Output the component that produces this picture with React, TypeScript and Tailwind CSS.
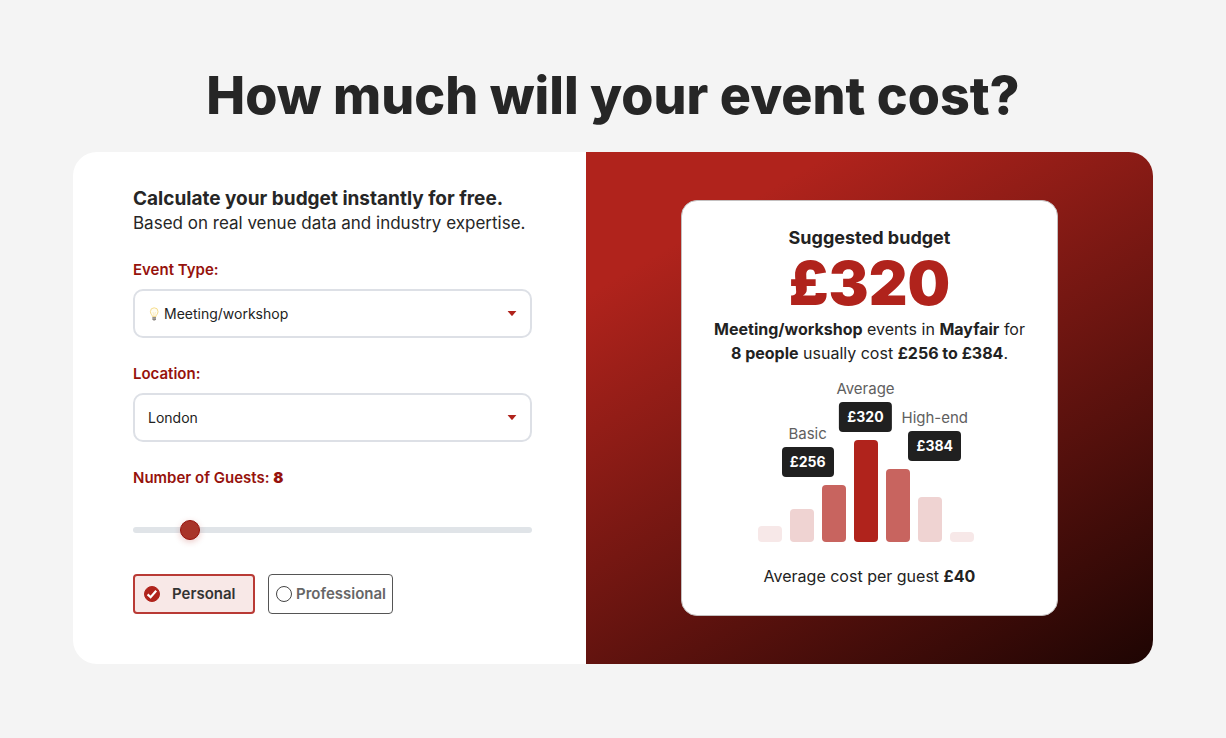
import { useId, useState, type ReactNode } from "react";

interface Bar {
  height: number;
  color: string;
  label?: string;
  price?: string;
  place?: string;
}

const BARS: Bar[] = [
  { height: 16, color: "bg-[#f7e8e8]" },
  { height: 33, color: "bg-[#efd3d2]" },
  { height: 57, color: "bg-[#c8645f]", label: "Basic", price: "£256", place: "right-3" },
  { height: 102, color: "bg-[#b0231c]", label: "Average", price: "£320", place: "left-1/2 -translate-x-1/2" },
  { height: 73, color: "bg-[#c8645f]", label: "High-end", price: "£384", place: "left-4" },
  { height: 45, color: "bg-[#efd3d2]" },
  { height: 10, color: "bg-[#f7e8e8]" },
];

const BulbIcon = () => (
  <svg viewBox="0 0 12 14" className="mr-1 h-3.5 w-3 shrink-0" aria-hidden="true">
    <path
      d="M4.4 9.6C4.3 7.9 2.4 7 2.4 4.6a3.8 3.8 0 0 1 7.6 0C10 7 8.1 7.9 8 9.6Z"
      fill="#fffdf2"
      stroke="#f6dc8c"
      strokeWidth="1"
    />
    <path d="M5.4 9.2V6L4.8 5M7 9.2V6l.6-1" fill="none" stroke="#f8e6ad" strokeWidth=".6" />
    <path d="M4.4 10H8v2.2l-1 1.4H5.4l-1-1.4Z" fill="#8b8680" />
    <path d="M4.4 11.2H8" stroke="#c9c4bc" strokeWidth=".6" />
  </svg>
);

const SelectField = ({ label, options, icon }: { label: string; options: string[]; icon?: ReactNode }) => {
  const id = useId();
  return (
    <div className="flex flex-col gap-[7px]">
      <label htmlFor={id} className="text-[15px] leading-6 font-semibold text-[#96120c]">
        {label}
      </label>
      <div className="flex h-[49px] items-center rounded-[10px] border-2 border-[#dde0e6] bg-white px-[13px]">
        {icon}
        <select id={id} className="h-full min-w-0 flex-1 appearance-none bg-transparent text-sm text-[#222222] outline-none">
          {options.map((o) => (
            <option key={o}>{o}</option>
          ))}
        </select>
        <svg viewBox="0 0 10 5" className="pointer-events-none h-[5px] w-2.5" aria-hidden="true">
          <path d="M.6 0h8.8L5.6 4.6a.8.8 0 0 1-1.2 0Z" fill="#b0231c" />
        </svg>
      </div>
    </div>
  );
};

export default function BudgetCalculator() {
  const [guests, setGuests] = useState(8);
  const [kind, setKind] = useState("Personal");

  return (
    <main className="min-h-screen bg-[#f4f4f4] px-6 pt-15 pb-[75px] font-['Inter',sans-serif] text-[#262626]">
      <h1 className="text-center text-[52px] leading-[72px] font-extrabold">How much will your event cost?</h1>

      <div className="mx-auto mt-5 grid max-w-[1080px] grid-cols-[19fr_21fr] overflow-hidden rounded-3xl bg-white">
        {/* Form */}
        <form className="flex flex-col pt-[35px] pr-[54px] pb-[49px] pl-15">
          <h2 className="text-[19px] leading-6 font-bold">Calculate your budget instantly for free.</h2>
          <p className="text-[17px] leading-6">Based on real venue data and industry expertise.</p>

          <div className="mt-[23px] flex flex-col gap-6">
            <SelectField label="Event Type:" options={["Meeting/workshop", "Birthday party", "Wedding"]} icon={<BulbIcon />} />
            <SelectField label="Location:" options={["London", "Manchester", "Bristol"]} />
            <div>
              <label htmlFor="guests" className="block text-[15px] leading-6 font-semibold text-[#96120c]">
                Number of Guests: <b>{guests}</b>
              </label>
              <input
                id="guests"
                type="range"
                min={2}
                max={50}
                value={guests}
                onChange={(e) => setGuests(Number(e.target.value))}
                className="mt-[37px] block h-1.5 w-full appearance-none rounded-full bg-[#e0e4e8] [&::-webkit-slider-thumb]:size-5 [&::-webkit-slider-thumb]:appearance-none [&::-webkit-slider-thumb]:rounded-full [&::-webkit-slider-thumb]:border [&::-webkit-slider-thumb]:border-[#96120c] [&::-webkit-slider-thumb]:bg-[#a83429] [&::-webkit-slider-thumb]:shadow-[0_2px_6px_rgba(176,35,28,0.25)]"
              />
            </div>
          </div>

          <div className="mt-[41px] flex gap-[13px]">
            {["Personal", "Professional"].map((k) => (
              <label
                key={k}
                className={
                  kind === k
                    ? "flex h-10 w-[122px] items-center gap-3 rounded border-2 border-[#b93a35] bg-[#f8e8e7] pl-[9px] text-[15px] font-semibold text-[#333333]"
                    : "flex h-10 w-[125px] items-center gap-1 rounded border border-[#555555] pl-[7px] text-[15px] font-semibold text-[#666666]"
                }
              >
                <span className="relative flex">
                  <input
                    type="radio"
                    name="kind"
                    checked={kind === k}
                    onChange={() => setKind(k)}
                    className="size-4 appearance-none rounded-full border border-[#444444] checked:border-[#b0231c] checked:bg-[#b0231c]"
                  />
                  {kind === k && (
                    <svg viewBox="0 0 16 16" className="pointer-events-none absolute inset-0 size-4" aria-hidden="true">
                      <path d="m3.6 8.4 3 2.8 5.6-6.4" fill="none" stroke="#fff" strokeWidth="2.2" />
                    </svg>
                  )}
                </span>
                {k}
              </label>
            ))}
          </div>
        </form>

        {/* Result */}
        <section className="flex items-center justify-center bg-[linear-gradient(150deg,#b0231c_17%,#1e0503_100%)] py-12">
          <div className="flex w-[377px] flex-col items-center rounded-2xl border border-[#c4c0c0] bg-white px-5 pt-[25px] pb-[27px] text-center text-[#222222]">
            <h3 className="text-lg leading-6 font-bold">Suggested budget</h3>
            <p className="text-[60px] leading-[67px] font-black text-[#b0231c]">£320</p>
            <p className="text-base leading-6">
              <b>Meeting/workshop</b> events in <b>Mayfair</b> for
              <br />
              <b>{guests} people</b> usually cost <b>£256 to £384</b>.
            </p>

            <div className="mt-[14px] flex h-[163px] items-end gap-2 pr-2">
              {BARS.map((bar, i) => (
                <div key={i} className={`relative w-6 rounded ${bar.color}`} style={{ height: bar.height }}>
                  {bar.label && (
                    <div className={`absolute bottom-full mb-2 flex flex-col items-center ${bar.place}`}>
                      <span className="text-[15px] leading-[26px] whitespace-nowrap text-[#606060]">{bar.label}</span>
                      <span className="rounded bg-[#202020] px-2 text-sm leading-[30px] font-bold text-white">{bar.price}</span>
                    </div>
                  )}
                </div>
              ))}
            </div>

            <p className="mt-[22px] text-base leading-6">
              Average cost per guest <b>£40</b>
            </p>
          </div>
        </section>
      </div>
    </main>
  );
}
